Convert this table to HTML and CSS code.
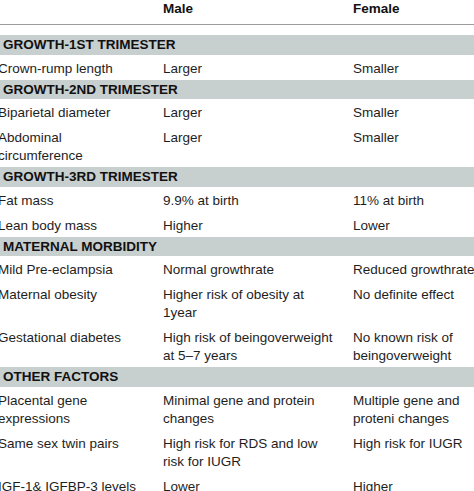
FILE: index.html
```html
<!DOCTYPE html>
<html lang="en">
<head>
<meta charset="utf-8">
<title>Sex differences table</title>
<link rel="stylesheet" href="styles.css">
</head>
<body>
<div class="table">
  <div class="row head"><div></div><div>Male</div><div>Female</div></div>

  <div class="section first">GROWTH-1ST TRIMESTER</div>
  <div class="row"><div>Crown-rump length</div><div>Larger</div><div>Smaller</div></div>

  <div class="section">GROWTH-2ND TRIMESTER</div>
  <div class="row"><div>Biparietal diameter</div><div>Larger</div><div>Smaller</div></div>
  <div class="row"><div>Abdominal circumference</div><div>Larger</div><div>Smaller</div></div>

  <div class="section">GROWTH-3RD TRIMESTER</div>
  <div class="row"><div>Fat mass</div><div>9.9% at birth</div><div>11% at birth</div></div>
  <div class="row"><div>Lean body mass</div><div>Higher</div><div>Lower</div></div>

  <div class="section">MATERNAL MORBIDITY</div>
  <div class="row"><div>Mild Pre-eclampsia</div><div>Normal growthrate</div><div class="nowrap">Reduced growthrate</div></div>
  <div class="row"><div>Maternal obesity</div><div>Higher risk of obesity at 1year</div><div>No definite effect</div></div>
  <div class="row"><div>Gestational diabetes</div><div>High risk of beingoverweight at 5–7 years</div><div>No known risk of beingoverweight</div></div>

  <div class="section">OTHER FACTORS</div>
  <div class="row"><div>Placental gene expressions</div><div>Minimal gene and protein changes</div><div>Multiple gene and proteni changes</div></div>
  <div class="row"><div>Same sex twin pairs</div><div>High risk for RDS and low risk for IUGR</div><div>High risk for IUGR</div></div>
  <div class="row"><div>IGF-1&amp; IGFBP-3 levels</div><div>Lower</div><div>Higher</div></div>
</div>
</body>
</html>
```
FILE: styles.css
```css
html, body {
  margin: 0;
  padding: 0;
  background: #ffffff;
  overflow: hidden;
}

body {
  font-family: "Liberation Sans", Arial, Helvetica, sans-serif;
  font-size: 13.5px;
  color: #1e1e1e;
}

.table {
  margin-left: -2px;
  width: 520px;
}

.row {
  display: grid;
  grid-template-columns: 149px 174px 134px;
  column-gap: 16px;
  padding: 5px 0 2px;
  line-height: 18px;
}

.row.head {
  height: 25px;
  box-sizing: border-box;
  padding: 0;
  line-height: 17px;
  font-weight: bold;
  color: #111;
  border-bottom: 1px solid #9c9c9c;
}

.nowrap {
  white-space: nowrap;
}

.section {
  background: #c8cfcf;
  height: 19.5px;
  line-height: 19.5px;
  padding-left: 5px;
  font-weight: bold;
  color: #111;
}

.section.first {
  margin-top: 10px;
}
```
